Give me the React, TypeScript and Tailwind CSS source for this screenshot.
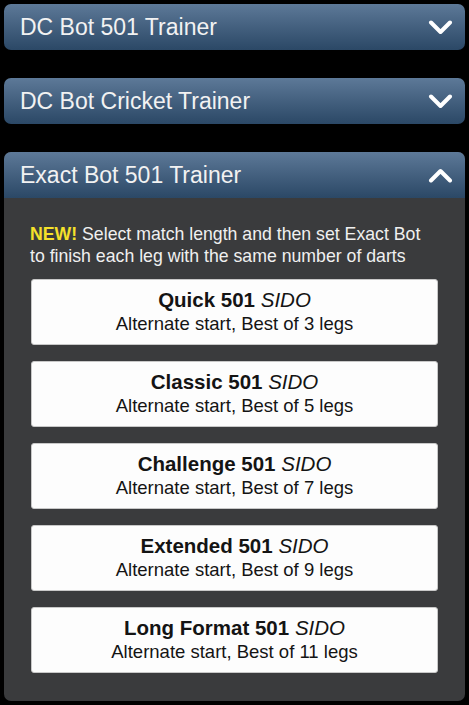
import React from "react";

const font = { fontFamily: '"Liberation Sans", Arial, sans-serif' };

function Chevron({ up }: { up?: boolean }) {
  return (
    <svg width="25" height="15" viewBox="0 0 25 15" className="shrink-0">
      <path
        d={up ? "M3 12.5 L12.5 3 L22 12.5" : "M3 2.5 L12.5 12 L22 2.5"}
        fill="none"
        stroke="#ffffff"
        strokeWidth="4"
        strokeLinecap="round"
        strokeLinejoin="round"
      />
    </svg>
  );
}

function Header({ title, up }: { title: string; up?: boolean }) {
  return (
    <div
      className={`flex h-[46px] items-center justify-between bg-gradient-to-b from-[#5d7998] to-[#2b4866] pl-4 pr-[12px] ${
        up ? "rounded-t-[7px]" : "rounded-[7px]"
      }`}
    >
      <span className="text-[23px] leading-none text-[#f2f2f2]">{title}</span>
      <Chevron up={up} />
    </div>
  );
}

const cards = [
  { name: "Quick 501", legs: 3 },
  { name: "Classic 501", legs: 5 },
  { name: "Challenge 501", legs: 7 },
  { name: "Extended 501", legs: 9 },
  { name: "Long Format 501", legs: 11 },
];

export default function App() {
  return (
    <div className="min-h-[705px] w-[469px] bg-black px-1 pt-1" style={font}>
      <div className="flex flex-col gap-[28px]">
        <Header title="DC Bot 501 Trainer" />
        <Header title="DC Bot Cricket Trainer" />
        <div className="rounded-[7px] bg-[#3a3b3d]">
          <Header title="Exact Bot 501 Trainer" up />
          <div className="px-[26px] pb-[28px] pt-[25px]">
            <p className="text-[17.7px] leading-[22px] text-[#f0f0f0]">
              <span className="font-bold text-[#f5e12a]">NEW!</span> Select match length and then set Exact Bot to finish each leg with the same number of darts
            </p>
            <div className="mt-[12px] flex flex-col gap-[16px] px-px">
              {cards.map((c) => (
                <div
                  key={c.name}
                  className="flex h-[66px] flex-col items-center justify-center rounded-[3px] border border-[#c8c8c8] bg-[#fdfdfd] text-[#141414]"
                >
                  <div className="text-[20.5px] leading-[24px]">
                    <span className="font-bold">{c.name}</span> <span className="italic">SIDO</span>
                  </div>
                  <div className="text-[18.5px] leading-[24px]">
                    Alternate start, Best of {c.legs} legs
                  </div>
                </div>
              ))}
            </div>
          </div>
        </div>
      </div>
    </div>
  );
}
